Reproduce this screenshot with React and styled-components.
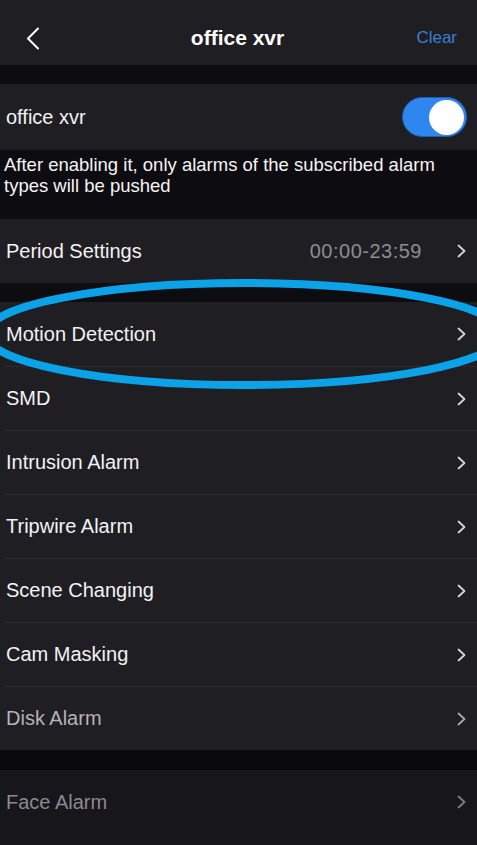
import React from "react";
import styled, { createGlobalStyle } from "styled-components";

const GlobalStyle = createGlobalStyle`
  html, body {
    margin: 0;
    padding: 0;
    background: #0d0c10;
    width: 477px;
    height: 845px;
    overflow: hidden;
  }
  * {
    box-sizing: border-box;
  }
`

const Page = styled.div`
  position: relative;
  width: 477px;
  height: 845px;
  overflow: hidden;
  background: #0d0c10;
  font-family: "Liberation Sans", Arial, sans-serif;
  color: #f2f2f4;
`

const Header = styled.div`
  height: 65px;
  background: #1f1e22;
  display: grid;
  grid-template-columns: 100px 1fr 100px;
  align-items: center;
  padding: 10px 20px 0 26px;
`

const BackButton = styled.div`
  display: flex;
  align-items: center;
  height: 100%;
  padding-top: 1px;
`

const Title = styled.div`
  text-align: center;
  font-size: 21px;
  font-weight: 700;
  color: #ffffff;
  padding-right: 8px;
`

const HeaderAction = styled.div`
  text-align: right;
  font-size: 17px;
  color: #3b80d3;
  padding-top: 1px;
`

const Gap = styled.div`
  height: ${p => p.h || 19}px;
  background: ${p => p.bg || "#0d0c10"};
`

const Group = styled.div`
  background: ${p => p.bg || "#1f1e22"};
  height: ${p => (p.fill ? "100%" : "auto")};
`

const Row = styled.div`
  height: ${p => p.h || 64}px;
  margin-left: 3px;
  padding: 0 11px 0 3px;
  display: flex;
  align-items: center;
  font-size: 20px;
  color: ${p => p.color || "#f2f2f4"};
  & + & {
    border-top: 1px solid #2d2c31;
  }
`

const Label = styled.span`
  flex: 1;
`

const Value = styled.span`
  font-size: 20px;
  letter-spacing: 0.5px;
  color: #8d8c92;
  margin-right: 35px;
`

const Note = styled.div`
  height: 69px;
  padding: 4px 10px 0 4px;
  font-size: 18.5px;
  line-height: 21px;
  color: #f4f4f6;
`

const ToggleTrack = styled.div`
  width: 65px;
  height: 40px;
  border-radius: 20px;
  background: #2f86ef;
  border: 1px solid #1c5fb4;
  display: flex;
  align-items: center;
  justify-content: ${p => (p.on ? "flex-end" : "flex-start")};
  padding: 2px;
  margin-right: -1px;
`

const ToggleKnob = styled.div`
  width: 35px;
  height: 35px;
  border-radius: 50%;
  background: #ffffff;
`

const Highlight = styled.svg`
  position: absolute;
  left: 0;
  top: 0;
  pointer-events: none;
`

const Chevron = ({ color = "#d4d4d8" }) => (
  <svg width="9" height="14" viewBox="0 0 9 14">
    <polyline points="1.5,1.5 7.5,7 1.5,12.5" fill="none" stroke={color} strokeWidth="1.8" strokeLinecap="round" strokeLinejoin="round" />
  </svg>
)

const alarms = [
  "Motion Detection",
  "SMD",
  "Intrusion Alarm",
  "Tripwire Alarm",
  "Scene Changing",
  "Cam Masking",
]

export default function App() {
  return (
    <Page>
      <GlobalStyle />
      <Header>
        <BackButton>
          <svg width="14" height="23" viewBox="0 0 14 23">
            <polyline points="12,1.5 2,11.5 12,21.5" fill="none" stroke="#ffffff" strokeWidth="2" strokeLinecap="round" strokeLinejoin="round" />
          </svg>
        </BackButton>
        <Title>office xvr</Title>
        <HeaderAction>Clear</HeaderAction>
      </Header>
      <Gap />
      <Group>
        <Row h={66}>
          <Label>office xvr</Label>
          <ToggleTrack on>
            <ToggleKnob />
          </ToggleTrack>
        </Row>
      </Group>
      <Note>After enabling it, only alarms of the subscribed alarm types will be pushed</Note>
      <Group>
        <Row>
          <Label>Period Settings</Label>
          <Value>00:00-23:59</Value>
          <Chevron />
        </Row>
      </Group>
      <Gap />
      <Group>
        {alarms.map(name => (
          <Row key={name}>
            <Label>{name}</Label>
            <Chevron />
          </Row>
        ))}
        <Row color="#b4b3b8">
          <Label>Disk Alarm</Label>
          <Chevron color="#a9a8ad" />
        </Row>
      </Group>
      <Gap h={20} bg="#09080b" />
      <Group bg="#17161a" fill>
        <Row color="#8b8a8f">
          <Label>Face Alarm</Label>
          <Chevron color="#7e7d82" />
        </Row>
      </Group>
      <Highlight width="477" height="845" viewBox="0 0 477 845">
        <ellipse cx="244" cy="334" rx="258" ry="51" fill="none" stroke="#0ba2e8" strokeWidth="8" />
      </Highlight>
    </Page>
  )
}
